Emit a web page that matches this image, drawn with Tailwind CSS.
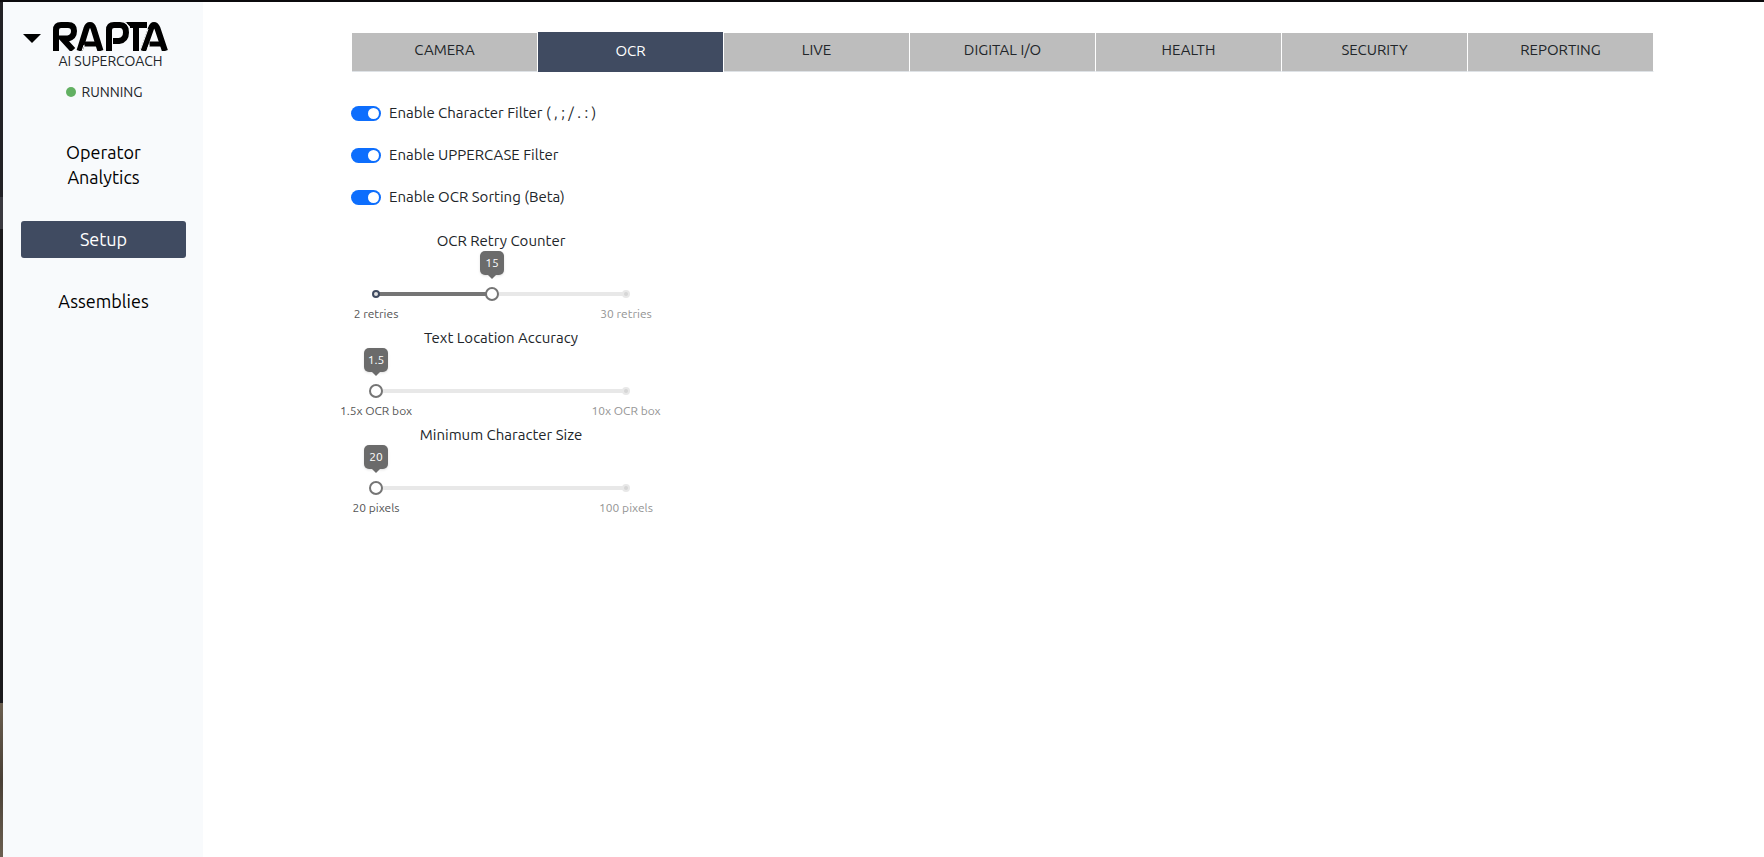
<!DOCTYPE html>
<html lang="en">
<head>
  <meta charset="UTF-8">
  <meta name="viewport" content="width=device-width, initial-scale=1.0">
  <title>RAPTA AI Supercoach - Setup</title>
  <script src="https://cdn.jsdelivr.net/npm/@tailwindcss/browser@4"></script>
</head>
<body class="bg-white text-[#212529] font-['Ubuntu','Noto_Sans',sans-serif]">
  <div class="flex min-h-screen border-t-2 border-[#0b0a0d]">
    <!-- window edge -->
    <div class="w-[3px] shrink-0 flex flex-col" aria-hidden="true">
      <div class="bg-[#232226] h-[195px]"></div>
      <div class="bg-[#3a393f] h-8"></div>
      <div class="bg-[#1b1a1d] h-[474px]"></div>
      <div class="bg-linear-to-b from-[#6b5f50] via-[#4a4036] to-[#6b5f50] grow"></div>
    </div>

    <aside class="w-[200px] shrink-0 bg-slate-50 pl-[18px] pr-[17px] pt-5 text-center">
      <header class="flex items-start gap-3 pl-[2px]">
        <button type="button" aria-label="Toggle menu" class="mt-3">
          <svg width="18" height="9" viewBox="0 0 18 9"><path d="M0 0h18L9 9z" fill="#000"/></svg>
        </button>
        <div>
          <svg width="115" height="29" viewBox="0 0 115 29" fill="none" stroke="#000" stroke-width="6" role="img" aria-label="RAPTA">
            <path d="M3 29V8q0-5 5-5h7q6 0 6 6t-6 7.500H9.500L20 28"/>
            <path d="M26.500 29 33.500 6.500Q34.500 3 37 3t3.500 3.500L47.500 29"/>
            <path d="M31.500 22H45" stroke-width="5"/>
            <path d="M56 29V8q0-5 5-5h6q6 0 6 7.500T66 19h-6"/>
            <path d="M77 3h17M83 3v26"/>
            <path d="M72 0h8l-2.500 5z" fill="#000" stroke="none"/>
            <path d="m72.500 0 5 7" stroke="#f8fafc" stroke-width="1"/>
            <path d="M90 29 98 6.500Q99 3 101 3t3.500 3.500L112 29"/>
            <path d="M96.500 22H109" stroke-width="5"/>
            <path d="m87 29 8-22M31 23l-2 6M96 23l-2 6" stroke="#f8fafc" stroke-width="1"/>
          </svg>
          <p class="text-sm leading-5">AI SUPERCOACH</p>
        </div>
      </header>
      <p class="mt-[11px] flex items-center justify-center gap-[5px] pl-[2px] text-sm leading-5">
        <span class="size-[10px] rounded-full bg-[#62b062]"></span>RUNNING
      </p>
      <nav class="mt-8 flex flex-col gap-[25px] text-[18px] leading-[25px] text-black">
        <a href="#" class="px-8 py-[6px]">Operator Analytics</a>
        <a href="#" class="py-[6px] rounded-[3px] bg-[#404b61] text-white">Setup</a>
        <a href="#" class="py-[6px]">Assemblies</a>
      </nav>
    </aside>

    <main class="grow pl-[148px] pr-[110px] pt-[30px]">
      <nav class="ml-px grid grid-cols-7 text-[15px] text-center">
        <button type="button" class="h-10 pb-1 bg-[#bdbdbd] border-y border-r border-white border-b-[#dee2e6]">CAMERA</button>
        <button type="button" class="h-10 pb-[2px] bg-[#404b61] border-r border-white text-white">OCR</button>
        <button type="button" class="h-10 pb-1 bg-[#bdbdbd] border-y border-r border-white border-b-[#dee2e6]">LIVE</button>
        <button type="button" class="h-10 pb-1 bg-[#bdbdbd] border-y border-r border-white border-b-[#dee2e6]">DIGITAL I/O</button>
        <button type="button" class="h-10 pb-1 bg-[#bdbdbd] border-y border-r border-white border-b-[#dee2e6]">HEALTH</button>
        <button type="button" class="h-10 pb-1 bg-[#bdbdbd] border-y border-r border-white border-b-[#dee2e6]">SECURITY</button>
        <button type="button" class="h-10 pb-1 bg-[#bdbdbd] border-y border-r border-white border-b-[#dee2e6]">REPORTING</button>
      </nav>

      <div class="mt-[29px] flex flex-col items-start gap-[18px] text-[15px] leading-6">
        <label class="flex items-center gap-2">
          <input type="checkbox" role="switch" checked class="appearance-none w-[30px] h-[15px] p-[2px] rounded-full bg-gray-300 checked:bg-[#0d6efd] flex checked:justify-end before:size-[11px] before:rounded-full before:bg-white">
          Enable Character Filter ( , ; / . : )
        </label>
        <label class="flex items-center gap-2">
          <input type="checkbox" role="switch" checked class="appearance-none w-[30px] h-[15px] p-[2px] rounded-full bg-gray-300 checked:bg-[#0d6efd] flex checked:justify-end before:size-[11px] before:rounded-full before:bg-white">
          Enable UPPERCASE Filter
        </label>
        <label class="flex items-center gap-2">
          <input type="checkbox" role="switch" checked class="appearance-none w-[30px] h-[15px] p-[2px] rounded-full bg-gray-300 checked:bg-[#0d6efd] flex checked:justify-end before:size-[11px] before:rounded-full before:bg-white">
          Enable OCR Sorting (Beta)
        </label>
      </div>

      <div class="mt-5 w-[300px] text-[15px] leading-6 text-center">
        <label for="retries" class="block">OCR Retry Counter</label>
        <div class="relative w-[250px] mx-auto pt-[39px] h-[73px]">
          <div class="h-1 rounded-full bg-[#e8e8e8]">
            <div data-fill class="h-1 rounded-full bg-[#757575]" style="width: 46.43%"></div>
          </div>
          <span class="absolute -left-1 top-[37px] size-2 rounded-full border-2 border-[#404b61] bg-[#e0e0e0]"></span>
          <span class="absolute -right-1 top-[37px] size-2 rounded-full border-2 border-[#e8e8e8] bg-[#d6d6d6]"></span>
          <input id="retries" type="range" min="2" max="30" value="15" class="absolute -left-[7px] top-[34px] w-[264px] h-[14px] appearance-none bg-transparent [&::-webkit-slider-thumb]:appearance-none [&::-webkit-slider-thumb]:size-[14px] [&::-webkit-slider-thumb]:rounded-full [&::-webkit-slider-thumb]:border-2 [&::-webkit-slider-thumb]:border-[#757575] [&::-webkit-slider-thumb]:bg-white">
          <output for="retries" class="absolute -top-[2px] -translate-x-1/2 size-6 rounded-[5px] bg-[#6b6b6b] text-white text-xs leading-6 shadow after:absolute after:top-full after:left-2 after:border-4 after:border-transparent after:border-t-[#6b6b6b]" style="left: 46.43%">15</output>
          <span class="absolute left-0 top-[49px] -translate-x-1/2 whitespace-nowrap text-xs leading-6 text-[#555]">2 retries</span>
          <span class="absolute left-full top-[49px] -translate-x-1/2 whitespace-nowrap text-xs leading-6 text-[#949494]">30 retries</span>
        </div>

        <label for="accuracy" class="block">Text Location Accuracy</label>
        <div class="relative w-[250px] mx-auto pt-[39px] h-[73px]">
          <div class="h-1 rounded-full bg-[#e8e8e8]">
            <div data-fill class="h-1 rounded-full bg-[#757575]" style="width: 0%"></div>
          </div>
          <span class="absolute -right-1 top-[37px] size-2 rounded-full border-2 border-[#e8e8e8] bg-[#d6d6d6]"></span>
          <input id="accuracy" type="range" min="1.5" max="10" step="0.5" value="1.5" class="absolute -left-[7px] top-[34px] w-[264px] h-[14px] appearance-none bg-transparent [&::-webkit-slider-thumb]:appearance-none [&::-webkit-slider-thumb]:size-[14px] [&::-webkit-slider-thumb]:rounded-full [&::-webkit-slider-thumb]:border-2 [&::-webkit-slider-thumb]:border-[#757575] [&::-webkit-slider-thumb]:bg-white">
          <output for="accuracy" class="absolute -top-[2px] -translate-x-1/2 size-6 rounded-[5px] bg-[#6b6b6b] text-white text-xs leading-6 shadow after:absolute after:top-full after:left-2 after:border-4 after:border-transparent after:border-t-[#6b6b6b]" style="left: 0%">1.5</output>
          <span class="absolute left-0 top-[49px] -translate-x-1/2 whitespace-nowrap text-xs leading-6 text-[#555]">1.5x OCR box</span>
          <span class="absolute left-full top-[49px] -translate-x-1/2 whitespace-nowrap text-xs leading-6 text-[#949494]">10x OCR box</span>
        </div>

        <label for="charsize" class="block">Minimum Character Size</label>
        <div class="relative w-[250px] mx-auto pt-[39px] h-[73px]">
          <div class="h-1 rounded-full bg-[#e8e8e8]">
            <div data-fill class="h-1 rounded-full bg-[#757575]" style="width: 0%"></div>
          </div>
          <span class="absolute -right-1 top-[37px] size-2 rounded-full border-2 border-[#e8e8e8] bg-[#d6d6d6]"></span>
          <input id="charsize" type="range" min="20" max="100" value="20" class="absolute -left-[7px] top-[34px] w-[264px] h-[14px] appearance-none bg-transparent [&::-webkit-slider-thumb]:appearance-none [&::-webkit-slider-thumb]:size-[14px] [&::-webkit-slider-thumb]:rounded-full [&::-webkit-slider-thumb]:border-2 [&::-webkit-slider-thumb]:border-[#757575] [&::-webkit-slider-thumb]:bg-white">
          <output for="charsize" class="absolute -top-[2px] -translate-x-1/2 size-6 rounded-[5px] bg-[#6b6b6b] text-white text-xs leading-6 shadow after:absolute after:top-full after:left-2 after:border-4 after:border-transparent after:border-t-[#6b6b6b]" style="left: 0%">20</output>
          <span class="absolute left-0 top-[49px] -translate-x-1/2 whitespace-nowrap text-xs leading-6 text-[#555]">20 pixels</span>
          <span class="absolute left-full top-[49px] -translate-x-1/2 whitespace-nowrap text-xs leading-6 text-[#949494]">100 pixels</span>
        </div>
      </div>
    </main>
  </div>

  <script>
    // keep the tooltip and the filled part in step with the thumb
    document.querySelectorAll('input[type=range]').forEach(input => {
      const tip = input.parentElement.querySelector('output');
      const fill = input.parentElement.querySelector('[data-fill]');

      input.addEventListener('input', () => {
        const pct = (input.value - input.min) / (input.max - input.min) * 100;
        tip.textContent = input.value;
        tip.style.left = pct + '%';
        fill.style.width = pct + '%';
      });
    });
  </script>
</body>
</html>
